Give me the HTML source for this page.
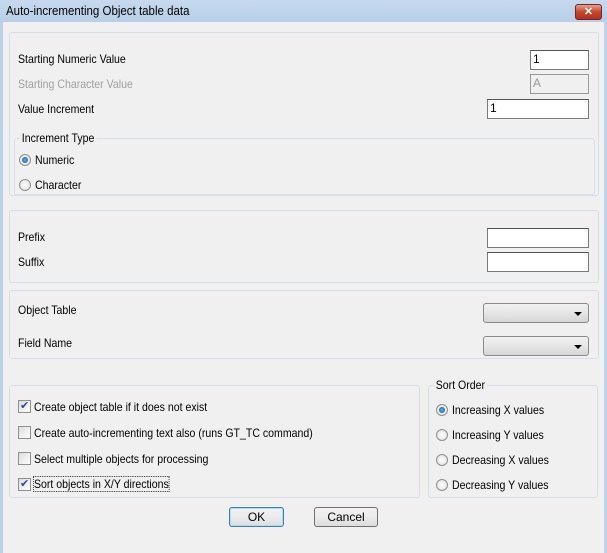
<!DOCTYPE html>
<html><head><style>
*{margin:0;padding:0;box-sizing:border-box}
body{width:607px;height:553px;overflow:hidden;background:#f0f0f0;font-family:"Liberation Sans",sans-serif;font-size:12px;color:#000;position:relative}
.abs{position:absolute}
.title{left:0;top:0;width:607px;height:22px;background:linear-gradient(#c6d9ee,#b8cfe8);}
.title span{position:absolute;left:6px;top:4px;font-size:12.5px;transform:scaleX(.92);transform-origin:left}
.close{left:575px;top:4px;width:27px;height:16px;border:1px solid #6b2a2a;border-radius:3px;background:linear-gradient(#e8a08a,#c8452c 50%,#b5301a);color:#fff;font-weight:bold;text-align:center;font-size:11px;line-height:14px}
.lb{left:0;top:22px;width:3px;height:531px;background:#bcd3ea}
.rb{right:0;top:22px;width:3px;height:531px;background:#bcd3ea}
.grp{border:1px solid #d5dfe5;border-radius:3px}
.t{position:absolute;white-space:nowrap;transform:scaleX(.88);transform-origin:left}
.in{position:absolute;background:#fff;border:1px solid #7a7a7a;border-top-color:#555;font-size:12px;padding-left:2px;line-height:17px}
.cb{position:absolute;height:20px;border:1px solid #8a8a8a;border-radius:3px;background:linear-gradient(#f2f2f2,#e6e6e6 50%,#d6d6d6)}
.cb:after{content:"";position:absolute;right:6px;top:8px;border:4px solid transparent;border-top:4px solid #000;border-bottom:0}
.rad{position:absolute;width:12px;height:12px;border-radius:50%;border:1px solid #8e8f8f;background:radial-gradient(#fff,#ddd)}
.rad.on:after{content:"";position:absolute;left:2px;top:2px;width:6px;height:6px;border-radius:50%;background:radial-gradient(#5fb8ee,#0d4f8a)}
.chk{position:absolute;width:13px;height:13px;border:1px solid #8e8f8f;background:linear-gradient(135deg,#dcdcdc,#fff)}
.chk.on:after{content:"✔";position:absolute;left:1px;top:-2px;font-size:11px;color:#2a4aa0}
.btn{position:absolute;height:20px;border:1px solid #707070;border-radius:3px;background:linear-gradient(#f2f2f2,#ebebeb 50%,#dddddd);text-align:center;line-height:18px}
.btn.def{border-color:#3c7fb1;box-shadow:inset 0 0 0 1px #a8e0f8}
</style></head><body>
<div class="abs title"><span>Auto-incrementing Object table data</span></div>
<div class="abs close">✕</div>
<div class="abs lb"></div><div class="abs rb"></div>

<div class="abs grp" style="left:9px;top:32px;width:590px;height:164px"></div>
<div class="t" style="left:18px;top:52px">Starting Numeric Value</div>
<div class="in" style="left:530px;top:50px;width:59px;height:20px">1</div>
<div class="t" style="left:18px;top:77px;color:#a0a0a0">Starting Character Value</div>
<div class="in" style="left:530px;top:74px;width:59px;height:20px;background:#f0f0f0;color:#999;border-color:#999">A</div>
<div class="t" style="left:18px;top:102px">Value Increment</div>
<div class="in" style="left:487px;top:99px;width:102px;height:20px">1</div>
<div class="abs grp" style="left:14px;top:138px;width:581px;height:57px"></div>
<div class="t" style="left:20px;top:131px;background:#f0f0f0;padding:0 2px">Increment Type</div>
<div class="rad on" style="left:19px;top:154px"></div>
<div class="t" style="left:35px;top:153px">Numeric</div>
<div class="rad" style="left:19px;top:179px"></div>
<div class="t" style="left:35px;top:178px">Character</div>

<div class="abs grp" style="left:9px;top:210px;width:590px;height:73px"></div>
<div class="t" style="left:18px;top:230px">Prefix</div>
<div class="in" style="left:487px;top:228px;width:102px;height:20px"></div>
<div class="t" style="left:18px;top:255px">Suffix</div>
<div class="in" style="left:487px;top:252px;width:102px;height:20px"></div>

<div class="abs grp" style="left:9px;top:290px;width:590px;height:69px"></div>
<div class="t" style="left:18px;top:303px">Object Table</div>
<div class="cb" style="left:483px;top:303px;width:106px"></div>
<div class="t" style="left:18px;top:336px">Field Name</div>
<div class="cb" style="left:483px;top:336px;width:106px"></div>

<div class="abs grp" style="left:9px;top:385px;width:411px;height:113px"></div>
<div class="chk on" style="left:18px;top:400px"></div>
<div class="t" style="left:34px;top:400px">Create object table if it does not exist</div>
<div class="chk" style="left:18px;top:426px"></div>
<div class="t" style="left:34px;top:426px">Create auto-incrementing text also (runs GT_TC command)</div>
<div class="chk" style="left:18px;top:452px"></div>
<div class="t" style="left:34px;top:452px">Select multiple objects for processing</div>
<div class="chk on" style="left:18px;top:478px"></div>
<div class="t" style="left:34px;top:477px;outline:1px dotted #333">Sort objects in X/Y directions</div>

<div class="abs grp" style="left:428px;top:385px;width:170px;height:113px"></div>
<div class="t" style="left:434px;top:378px;background:#f0f0f0;padding:0 2px">Sort Order</div>
<div class="rad on" style="left:436px;top:404px"></div><div class="t" style="left:452px;top:403px">Increasing X values</div>
<div class="rad" style="left:436px;top:429px"></div><div class="t" style="left:452px;top:428px">Increasing Y values</div>
<div class="rad" style="left:436px;top:454px"></div><div class="t" style="left:452px;top:453px">Decreasing X values</div>
<div class="rad" style="left:436px;top:479px"></div><div class="t" style="left:452px;top:478px">Decreasing Y values</div>

<div class="btn def" style="left:229px;top:507px;width:55px">OK</div>
<div class="btn" style="left:314px;top:507px;width:64px">Cancel</div>
</body></html>
